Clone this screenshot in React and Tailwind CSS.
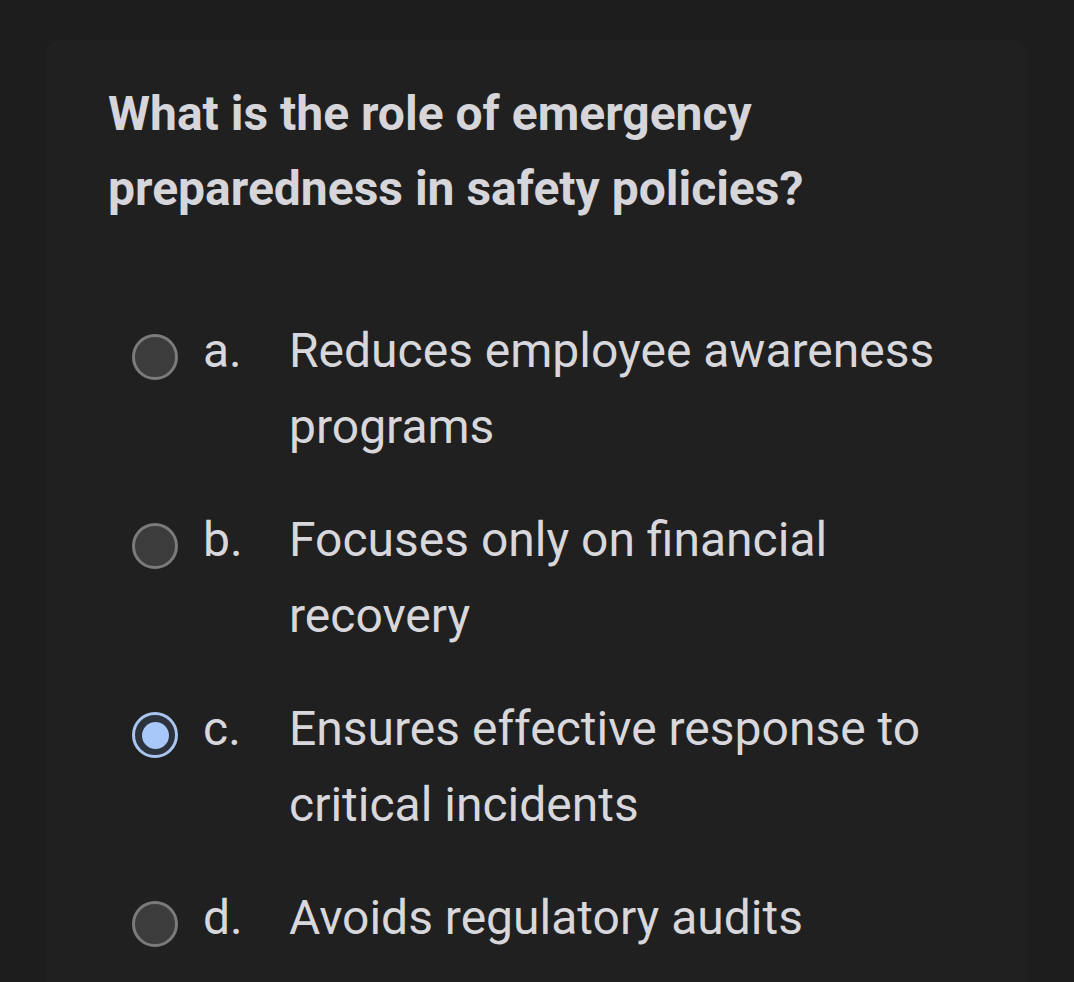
import React from 'react';

const options = [
  { key: 'a', text: 'Reduces employee awareness programs' },
  { key: 'b', text: 'Focuses only on financial recovery' },
  { key: 'c', text: 'Ensures effective response to critical incidents', selected: true },
  { key: 'd', text: 'Avoids regulatory audits' },
];

function Radio({ selected }) {
  if (selected) {
    return (
      <div className="w-[46px] h-[46px] shrink-0 rounded-full border-[3px] border-[#a9c6f0] bg-[#2d333d] flex items-center justify-center">
        <div className="w-[27px] h-[27px] rounded-full bg-[#a8c8fa]" />
      </div>
    );
  }
  return <div className="w-[46px] h-[46px] shrink-0 rounded-full border-[3px] border-[#7b7b7b] bg-[#3c3c3c]" />;
}

export default function App() {
  return (
    <div className="w-[1074px] h-[982px] overflow-hidden bg-[#1d1d1d] pt-[40px] pl-[46px] pr-[46px]" style={{ fontFamily: 'Roboto, "Liberation Sans", sans-serif' }}>
      <div className="bg-[#202020] rounded-t-[14px] h-[1000px] pt-[36px] pl-[62px] pr-[40px]">
        <h1 className="text-[48px] leading-[75px] font-bold text-[#d6d5da] w-[800px]">
          What is the role of emergency preparedness in safety policies?
        </h1>
        <div className="mt-[87px] pl-[24px] flex flex-col gap-[37px]">
          {options.map((o) => (
            <div key={o.key} className="flex items-start">
              <div className="mt-[21px]">
                <Radio selected={o.selected} />
              </div>
              <span className="ml-[25px] w-[86px] shrink-0 text-[48px] leading-[76px] text-[#d8d7dc]">{o.key}.</span>
              <span className="text-[48px] leading-[76px] text-[#d8d7dc] w-[660px]">{o.text}</span>
            </div>
          ))}
        </div>
      </div>
    </div>
  );
}
